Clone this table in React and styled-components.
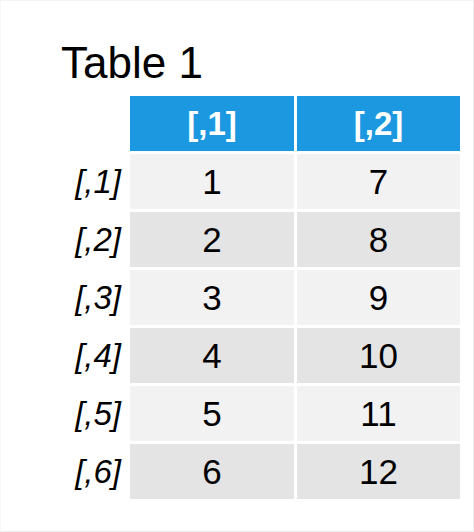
import React from "react";
import styled, { createGlobalStyle } from "styled-components";

const Global = createGlobalStyle`
  html, body { margin: 0; padding: 0; background: #ffffff; }
  body { font-family: "Liberation Sans", Arial, sans-serif; }
`;

const Frame = styled.div`
  box-sizing: border-box;
  width: 474px;
  height: 532px;
  border: 1px solid #ececec;
  border-left-color: #f7f7f7;
  border-top-color: #f3f3f3;
  padding: 40px 0 0 0;
  background: #ffffff;
`;

const Title = styled.h1`
  margin: 0 0 11px 60px;
  font-family: "Liberation Sans", Arial, sans-serif;
  font-weight: 400;
  font-size: 44px;
  line-height: 44px;
  color: #000000;
`;

const Grid = styled.div`
  display: grid;
  grid-template-columns: 126px 164px 163px;
  grid-auto-rows: 55px;
  column-gap: 3px;
  row-gap: 3px;
`;

const Corner = styled.div``;

const HeadCell = styled.div`
  background: #1b98e0;
  color: #ffffff;
  font-weight: 700;
  font-size: 33px;
  display: flex;
  align-items: center;
  justify-content: center;
  padding-top: 1px;
`;

const RowLabel = styled.div`
  display: flex;
  align-items: center;
  justify-content: flex-end;
  padding-right: 6px;
  font-style: italic;
  font-size: 33px;
  color: #000000;
`;

const Cell = styled.div`
  background: ${(p) => (p.$alt ? "#e4e4e4" : "#f2f2f2")};
  display: flex;
  align-items: center;
  justify-content: center;
  font-size: 35px;
  color: #000000;
`;

const rows = [
  [1, 7],
  [2, 8],
  [3, 9],
  [4, 10],
  [5, 11],
  [6, 12],
];

export default function App() {
  return (
    <>
      <Global />
      <Frame>
        <Title>Table 1</Title>
        <Grid>
          <Corner />
          <HeadCell>[,1]</HeadCell>
          <HeadCell>[,2]</HeadCell>
          {rows.map((r, i) => (
            <React.Fragment key={i}>
              <RowLabel>[,{i + 1}]</RowLabel>
              <Cell $alt={i % 2 === 1}>{r[0]}</Cell>
              <Cell $alt={i % 2 === 1}>{r[1]}</Cell>
            </React.Fragment>
          ))}
        </Grid>
      </Frame>
    </>
  );
}
